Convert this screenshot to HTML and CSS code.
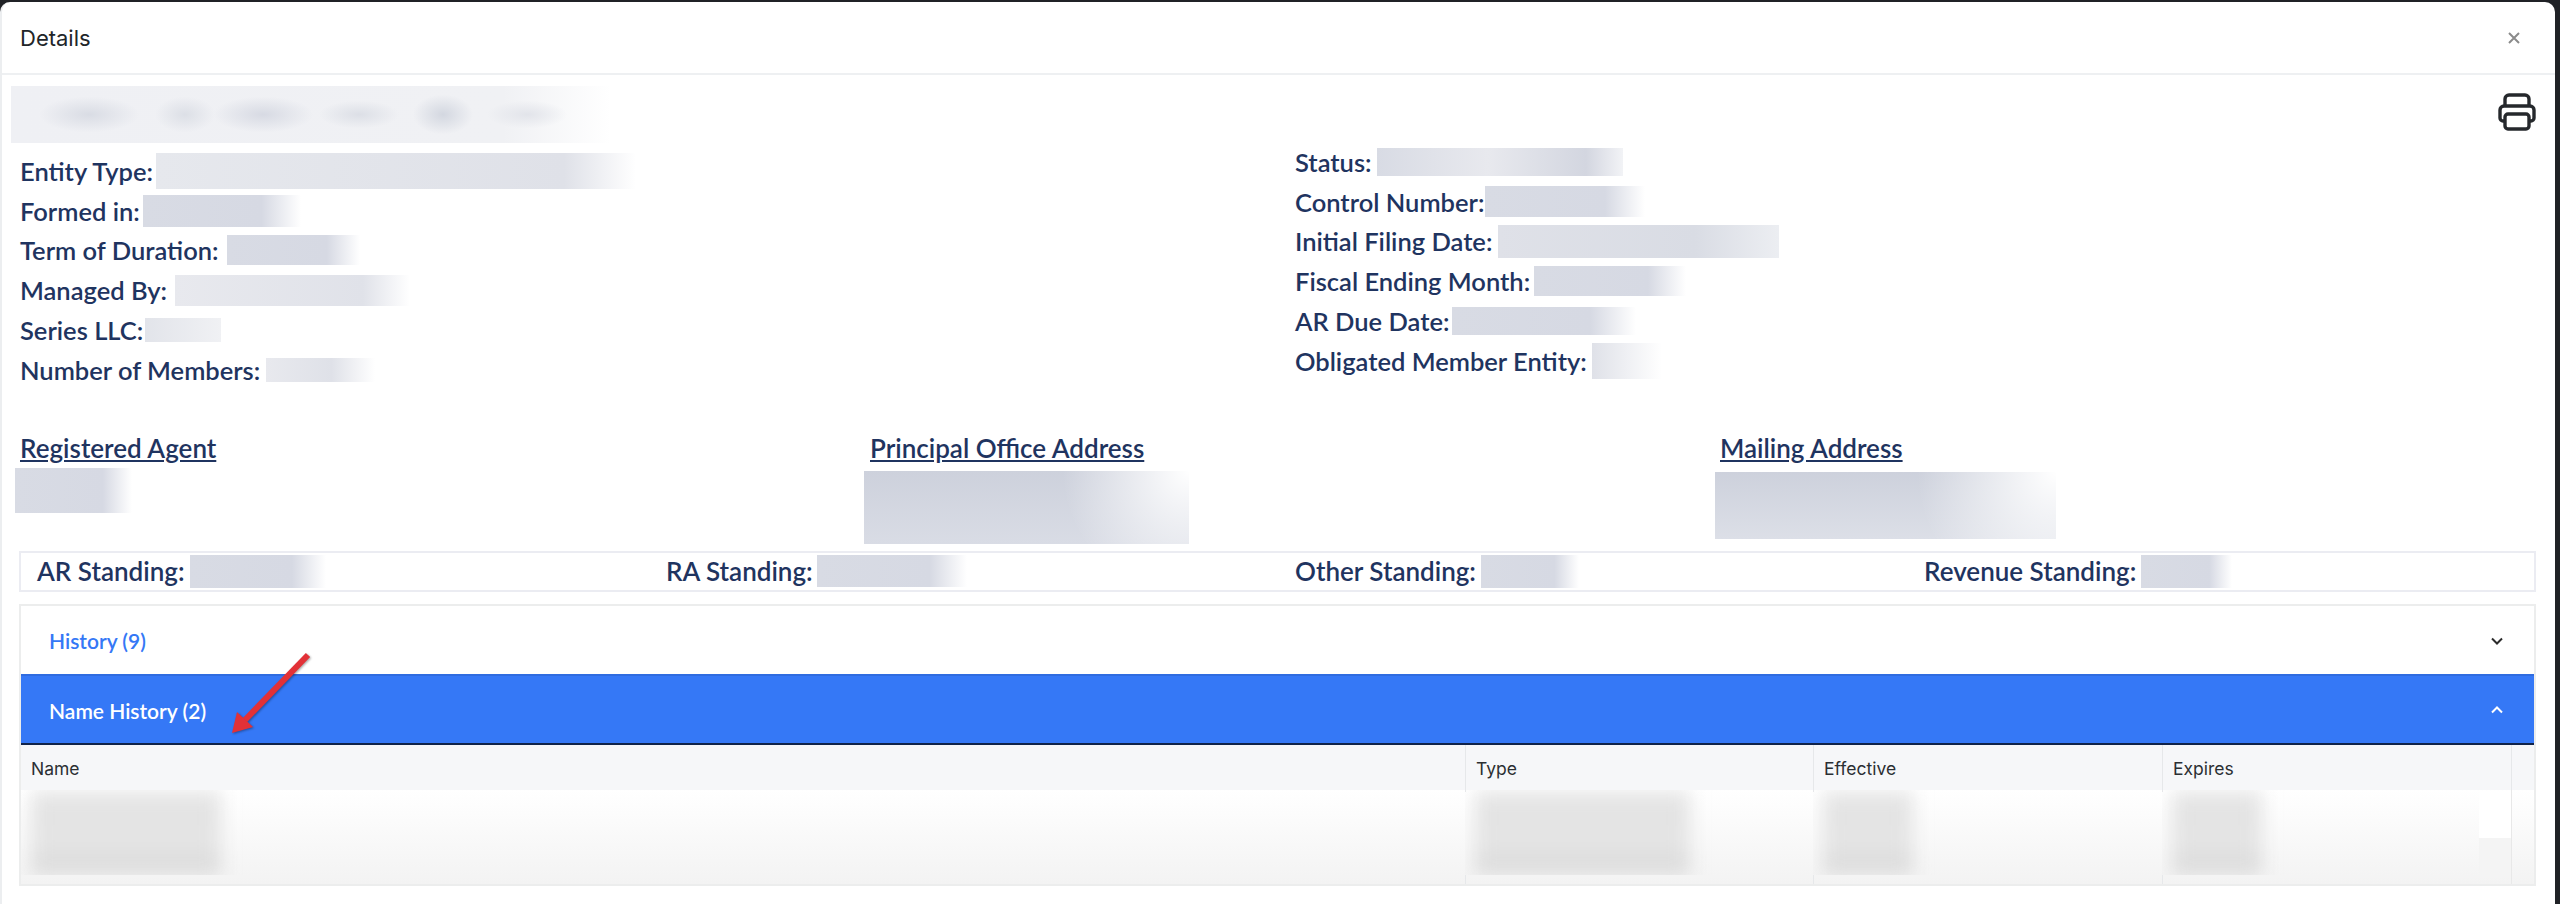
FILE: index.html
```html
<!DOCTYPE html>
<html lang="en">
<head>
    <meta charset="UTF-8">
    <title>Details</title>
    <link rel="stylesheet" href="styles.css">
</head>
<body>
    <div class="modal">
        <div class="modal-header">
            <span class="modal-title">Details</span>
            <svg class="close-icon" viewBox="0 0 12 12"><path d="M1 1l10 10M11 1L1 11"/></svg>
        </div>

        <div class="modal-body">
            <svg class="print-icon" viewBox="0 0 38 38">
                <path d="M7 12V6a4 4 0 0 1 4-4h16a4 4 0 0 1 4 4v6"/>
                <path d="M7 28H5a3 3 0 0 1-3-3V17a4 4 0 0 1 4-4h26a4 4 0 0 1 4 4v8a3 3 0 0 1-3 3h-2"/>
                <rect x="7" y="21" width="24" height="15" rx="3"/>
            </svg>

            <div class="info-grid">
                <div class="info-left">
                    <div class="redact entity-name"></div>
                    <div class="info-row">Entity Type:<span class="redact r-type"></span></div>
                    <div class="info-row">Formed in:<span class="redact r-formed"></span></div>
                    <div class="info-row">Term of Duration:<span class="redact r-term"></span></div>
                    <div class="info-row">Managed By:<span class="redact r-managed"></span></div>
                    <div class="info-row">Series LLC:<span class="redact r-series"></span></div>
                    <div class="info-row">Number of Members:<span class="redact r-members"></span></div>
                </div>
                <div class="info-right">
                    <div class="info-row">Status:<span class="redact r-status"></span></div>
                    <div class="info-row">Control Number:<span class="redact r-control"></span></div>
                    <div class="info-row">Initial Filing Date:<span class="redact r-filing"></span></div>
                    <div class="info-row">Fiscal Ending Month:<span class="redact r-fiscal"></span></div>
                    <div class="info-row">AR Due Date:<span class="redact r-due"></span></div>
                    <div class="info-row">Obligated Member Entity:<span class="redact r-obligated"></span></div>
                </div>
            </div>

            <div class="address-grid">
                <div class="address">
                    <div class="address-title">Registered Agent</div>
                    <div class="redact a-agent"></div>
                </div>
                <div class="address">
                    <div class="address-title">Principal Office Address</div>
                    <div class="redact a-office"></div>
                </div>
                <div class="address">
                    <div class="address-title">Mailing Address</div>
                    <div class="redact a-mailing"></div>
                </div>
            </div>

            <div class="standing">
                <div class="standing-item">AR Standing:<span class="redact s-ar"></span></div>
                <div class="standing-item">RA Standing:<span class="redact s-ra"></span></div>
                <div class="standing-item">Other Standing:<span class="redact s-other"></span></div>
                <div class="standing-item">Revenue Standing:<span class="redact s-revenue"></span></div>
            </div>

            <div class="accordion">
                <div class="accordion-head">
                    <span>History (9)</span>
                    <svg class="chevron" viewBox="0 0 12 8"><path d="M1 1.5l5 5 5-5"/></svg>
                </div>
                <div class="accordion-head open">
                    <span>Name History (2)</span>
                    <svg class="chevron" viewBox="0 0 12 8"><path d="M1 6.5l5-5 5 5"/></svg>
                </div>
                <div class="table-head">
                    <div class="th">Name</div>
                    <div class="th">Type</div>
                    <div class="th">Effective</div>
                    <div class="th">Expires</div>
                    <div class="th"></div>
                </div>
                <div class="table-body">
                    <div class="td"><div class="cell-clip"><div class="smudge c-name"></div></div></div>
                    <div class="td"><div class="cell-clip"><div class="smudge c-type"></div></div></div>
                    <div class="td"><div class="cell-clip"><div class="smudge c-date"></div></div></div>
                    <div class="td"><div class="cell-clip"><div class="smudge c-date"></div></div><div class="row-end"></div></div>
                    <div class="td td-last"></div>
                </div>
            </div>
        </div>

        <!-- annotation drawn over the screenshot -->
        <svg class="arrow" viewBox="0 0 100 100">
            <path class="arrow-shaft" d="M88 5L25 70"/>
            <path d="M12 83l5-21 16 15z"/>
        </svg>
    </div>
</body>
</html>
```

FILE: styles.css
```css
* {
    box-sizing: border-box;
}

body {
    margin: 0;
    height: 904px;
    overflow: hidden;
    background-color: #202226;
    font-family: 'Lato', sans-serif;
    color: #1f3460;
}

.modal {
    position: relative;
    width: 2555px;
    height: 902px;
    margin-top: 2px;
    background-color: #fff;
    border-left: 2px solid #eceef0;
    border-radius: 10px 10px 0 0;
}

.modal-header {
    display: flex;
    justify-content: space-between;
    align-items: center;
    height: 73px;
    padding: 1px 10px 0 18px;
    border-bottom: 2px solid #eef0f2;
}

.modal-title {
    font-family: 'Inter', sans-serif;
    font-size: 22px;
    color: #212529;
}

.close-icon {
    width: 12px;
    height: 12px;
    margin-right: 25px;
    fill: none;
    stroke: #8b8b8b;
    stroke-width: 2;
}

.modal-body {
    position: relative;
    padding: 0 19px 0 17px;
}

.print-icon {
    position: absolute;
    top: 18px;
    right: 19px;
    width: 38px;
    height: 38px;
    fill: none;
    stroke: #25282c;
    stroke-width: 3.4;
}

.info-grid {
    display: grid;
    grid-template-columns: 1275px 1fr;
    padding-left: 1px;
}

.info-left {
    padding-top: 11px;
}

.info-right {
    padding-top: 67px;
}

.info-row {
    display: flex;
    align-items: center;
    height: 39.8px;
    font-size: 25.5px;
    font-weight: 600;
    white-space: nowrap;
}

/* blurred values, hard left edge fading out to the right */
.redact {
    display: block;
    flex-shrink: 0;
    background: linear-gradient(90deg, #d8dbe4 0%, #d6d9e3 75%, rgba(226, 228, 235, 0) 100%);
}

.entity-name {
    width: 600px;
    height: 57px;
    margin: 0 0 8px -9px;
    background:
        radial-gradient(ellipse 50px 18px at 13% 50%, #d9dce4, rgba(217, 220, 228, 0)),
        radial-gradient(ellipse 30px 18px at 29% 50%, #dcdfe6, rgba(217, 220, 228, 0)),
        radial-gradient(ellipse 50px 18px at 42% 50%, #d7dae3, rgba(217, 220, 228, 0)),
        radial-gradient(ellipse 40px 14px at 58% 50%, #dcdfe6, rgba(217, 220, 228, 0)),
        radial-gradient(ellipse 30px 20px at 72% 50%, #d3d7e0, rgba(217, 220, 228, 0)),
        radial-gradient(ellipse 40px 14px at 86% 50%, #e2e4ea, rgba(217, 220, 228, 0)),
        linear-gradient(90deg, #eff0f4 0%, #f0f1f4 82%, rgba(240, 241, 244, 0) 100%);
}

.r-type { width: 480px; height: 36px; margin-left: 3px; background: linear-gradient(90deg, #e6e8ed 0%, #dfe1e8 85%, rgba(226, 228, 235, 0) 100%); }
.r-formed { width: 158px; height: 32px; margin-left: 3px; }
.r-term { width: 133px; height: 30px; margin-left: 8px; }
.r-managed { width: 235px; height: 31px; margin-left: 8px; background: linear-gradient(90deg, #e8e9ee 0%, #e0e2e9 80%, rgba(226, 228, 235, 0) 100%); }
.r-series { width: 76px; height: 24px; margin-left: 2px; background: linear-gradient(90deg, #e2e4ea, #f0f1f4); }
.r-members { width: 109px; height: 24px; margin-left: 6px; background: linear-gradient(90deg, #e8e9ee, #dfe1e8 60%, rgba(226, 228, 235, 0)); }
.r-status { width: 246px; height: 28px; margin-left: 5px; background: linear-gradient(90deg, #d8dbe4, #e8e9ee 45%, #d3d6e0 85%, #f2f3f6); }
.r-control { width: 160px; height: 31px; margin-left: 1px; }
.r-filing { width: 281px; height: 33px; margin-left: 6px; background: linear-gradient(90deg, #dfe1e8, #d9dce4 70%, #eceef2); }
.r-fiscal { width: 152px; height: 30px; margin-left: 4px; }
.r-due { width: 184px; height: 28px; margin-left: 3px; }
.r-obligated { width: 70px; height: 36px; margin-left: 5px; background: linear-gradient(90deg, #dfe1e8, rgba(226, 228, 235, 0)); }

.address-grid {
    display: grid;
    grid-template-columns: 850px 850px 1fr;
    height: 123px;
    margin-top: 38px;
    padding-left: 1px;
}

.address-title {
    height: 40px;
    line-height: 40px;
    font-size: 26px;
    font-weight: 600;
    text-decoration: underline;
}

.a-agent { width: 117px; height: 45px; margin-left: -5px; }
.a-office {
    width: 325px;
    height: 73px;
    margin: 3px 0 0 -6px;
    background:
        radial-gradient(circle at 100% 0, #fff 0, rgba(255, 255, 255, 0) 38%),
        linear-gradient(#cdd1dc, #d9dce5);
}
.a-mailing {
    width: 341px;
    height: 67px;
    margin: 4px 0 0 -5px;
    background:
        radial-gradient(circle at 100% 0, #fff 0, rgba(255, 255, 255, 0) 40%),
        linear-gradient(#cdd1dc, #dcdfe7);
}

.standing {
    display: grid;
    grid-template-columns: repeat(4, 629px);
    height: 41px;
    padding-left: 16px;
    border: 2px solid #ebecf2;
}

.standing-item {
    display: flex;
    align-items: center;
    font-size: 26px;
    font-weight: 600;
    white-space: nowrap;
}

.s-ar { width: 136px; height: 33px; margin-left: 5px; }
.s-ra { width: 150px; height: 32px; margin-left: 4px; }
.s-other { width: 98px; height: 33px; margin-left: 5px; }
.s-revenue { width: 91px; height: 33px; margin-left: 5px; }

.accordion {
    height: 282px;
    margin-top: 12px;
    border: 2px solid #eceded;
}

.accordion-head {
    display: flex;
    justify-content: space-between;
    align-items: center;
    height: 68px;
    padding: 2px 31px 0 28px;
    font-size: 21px;
    font-weight: 600;
    color: #3578f6;
}

.accordion-head .chevron {
    width: 12px;
    height: 8px;
    fill: none;
    stroke: #2b2b2b;
    stroke-width: 2;
}

.accordion-head.open {
    height: 71px;
    color: #fff;
    background-color: #3578f6;
    border-top: 2px solid #2f6ce0;
    border-bottom: 2px solid #10234a;
}

.accordion-head.open .chevron {
    stroke: #fff;
}

.table-head,
.table-body {
    display: grid;
    grid-template-columns: 1444px 348px 349px 349px 1fr;
}

.table-head {
    height: 45px;
    background-color: #f6f7f9;
}

.th {
    padding-left: 10px;
    line-height: 47px;
    font-family: 'Inter', sans-serif;
    font-size: 17.5px;
    color: #2b2f33;
    border-left: 1px solid #e6e8ea;
}

.th:first-child {
    border-left: none;
}

.table-body {
    height: 94px;
    background: linear-gradient(#fff, #f3f3f3);
}

/* column rule only shows under the blur */
.td {
    position: relative;
    background: linear-gradient(#e6e8ea, #e6e8ea) left bottom / 1px 9px no-repeat;
}

.td:first-child {
    background: none;
}

.cell-clip {
    height: 85px;
    padding-left: 10px;
    overflow: hidden;
}

.td-last {
    border-left: 1px solid #e8e8e8;
    background: none;
}

.smudge {
    height: 85px;
    background: linear-gradient(#e8e8e8, #e2e2e2 35%, #e6e6e6 55%, #d9d9d9);
    filter: blur(9px);
}

.c-name { width: 190px; }
.c-type { width: 215px; }
.c-date { width: 90px; }

.row-end {
    position: absolute;
    top: 2px;
    right: 0;
    width: 32px;
    height: 83px;
    background: linear-gradient(#fff 55%, #f4f4f4 55%);
}

/* red pointer over the accordion */
.arrow {
    position: absolute;
    left: 218px;
    top: 648px;
    width: 100px;
    height: 100px;
    fill: #e23137;
    overflow: visible;
    filter: drop-shadow(1px 1px 1px rgba(0, 0, 0, 0.35));
}

.arrow-shaft {
    fill: none;
    stroke: #e23137;
    stroke-width: 6;
}
```
